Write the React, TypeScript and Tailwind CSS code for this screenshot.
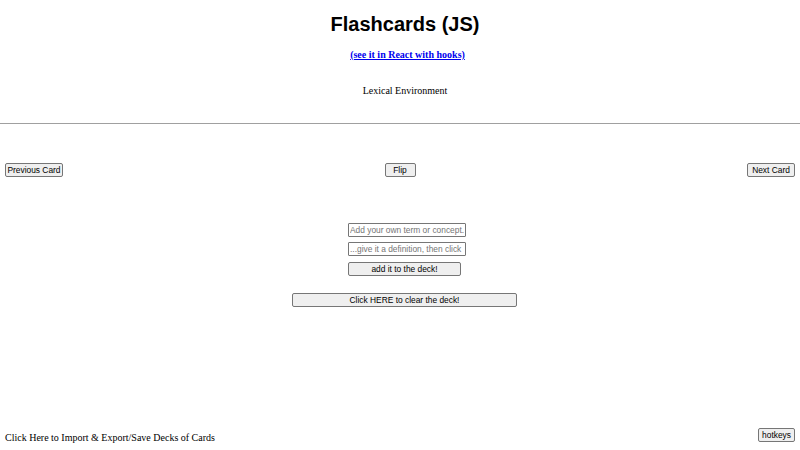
import React from "react";

const btn =
  "h-[14px] bg-[#efefef] border border-[#767676] rounded-[2px] text-[8.4px] leading-none text-black font-['Liberation_Sans',Arial,sans-serif] flex items-center justify-center";

const field =
  "h-[14px] w-[118px] border border-[#767676] rounded-[1px] px-[1px] text-[8.4px] leading-none font-['Liberation_Sans',Arial,sans-serif] placeholder:text-[#757575] outline-none bg-white";

export default function App() {
  return (
    <div className="min-h-[450px] flex flex-col bg-white text-black font-['Liberation_Serif','Times_New_Roman',serif]">
      <div className="pt-[12px] pl-[10px] flex flex-col items-center">
        <h1 className="text-[20px] leading-[24px] font-bold font-['Liberation_Sans',Arial,sans-serif]">
          Flashcards (JS)
        </h1>
        <a
          href="#"
          className="mt-[13px] pl-[5px] text-[10px] leading-[12px] font-bold text-[#0000ee] underline"
        >
          (see it in React with hooks)
        </a>
        <p className="mt-[24px] text-[10px] leading-[12px]">Lexical Environment</p>
      </div>

      <hr className="mt-[26px] border-0 border-t border-[#a0a0a0]" />

      <div className="mt-[39px] grid grid-cols-[1fr_auto_1fr] items-center px-[5px]">
        <button className={`${btn} w-[58px] justify-self-start`}>Previous Card</button>
        <button className={`${btn} w-[31px]`}>Flip</button>
        <button className={`${btn} w-[48px] justify-self-end`}>Next Card</button>
      </div>

      <div className="mt-[46px] flex flex-col items-center pl-[9px]">
        <div className="w-[118px] flex flex-col items-start ml-[5px]">
          <input className={field} placeholder="Add your own term or concept." />
          <input className={`${field} mt-[5px]`} placeholder="...give it a definition, then click" />
          <button className={`${btn} w-[113px] mt-[6px]`}>add it to the deck!</button>
        </div>
        <button className={`${btn} w-[225px] mt-[17px]`}>Click HERE to clear the deck!</button>
      </div>

      <div className="mt-auto flex justify-between items-end px-[5px] pb-[6px]">
        <p className="text-[10px] leading-[12px]">Click Here to Import &amp; Export/Save Decks of Cards</p>
        <button className={`${btn} w-[37px] mb-[2px]`}>hotkeys</button>
      </div>
    </div>
  );
}
